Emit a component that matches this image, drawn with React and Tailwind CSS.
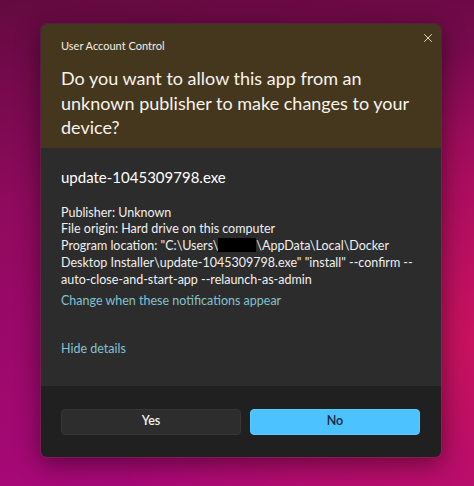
import { X } from 'lucide-react';

export default function App() {
	return (
		<div
			className="w-[474px] h-[486px] overflow-hidden pt-[23px] pl-[40px] bg-[radial-gradient(ellipse_at_100%_70%,#c8125e_0%,rgba(200,18,94,0)_60%),linear-gradient(175deg,#640a40_0%,#900a5e_40%,#aa087a_100%)]"
			style={{ fontFamily: 'Lato, "Noto Sans", sans-serif' }}>
			{/* Dialog */}
			<div className="w-[402px] rounded-[7px] overflow-hidden shadow-[0_6px_24px_rgba(0,0,0,0.45)] border border-[#3a3a3a]/40">
				{/* Header */}
				<div className="relative bg-[#45371d] pl-[20px] pr-[20px] pt-[14px] pb-[8px]">
					<div className="text-[11px] leading-[16px] text-[#f2eee6]">
						User Account Control
					</div>
					<button className="absolute top-[6px] right-[6px] w-[15px] h-[15px] flex items-center justify-center text-[#f0ece4]">
						<X size={14} strokeWidth={1.5} />
					</button>
					<h1 className="mt-[12px] text-[18px] leading-[24.5px] text-[#f7f4ee] pr-[4px]">
						Do you want to allow this app from an unknown publisher to make
						changes to your device?
					</h1>
				</div>

				{/* Body */}
				<div className="bg-[#2c2c2c] pl-[20px] pr-[20px] pt-[19px] h-[238px]">
					<div className="text-[15px] leading-[20px] text-white">
						update-1045309798.exe
					</div>
					<div className="mt-[18px] text-[12.5px] leading-[16.75px] text-[#f0f0f0]">
						<div>Publisher: Unknown</div>
						<div>File origin: Hard drive on this computer</div>
						<div>
							Program location: &quot;C:\Users\
							<span className="inline-block w-[38px] h-[14px] bg-black align-[-2px]" />
							\AppData\Local\Docker Desktop Installer\update-1045309798.exe&quot;
							&quot;install&quot; --confirm --auto-close-and-start-app
							--relaunch-as-admin
						</div>
					</div>
					<div className="mt-[5px] text-[12.5px] leading-[16.75px] text-[#82c2d2]">
						Change when these notifications appear
					</div>
					<div className="mt-[31px] text-[12.5px] leading-[16.75px] text-[#82c2d2]">
						Hide details
					</div>
				</div>

				{/* Footer */}
				<div className="bg-[#202020] pl-[20px] pt-[23px] pb-[22px] flex gap-[9px]">
					<button className="w-[180px] h-[26px] rounded-[4px] bg-[#2d2d2d] border border-[#363636] text-[12.5px] font-semibold text-[#f2f2f2]">
						Yes
					</button>
					<button className="w-[170px] h-[26px] rounded-[4px] bg-[#4cc2ff] border border-[#5ccaff] text-[12.5px] font-semibold text-[#0a2a40]">
						No
					</button>
				</div>
			</div>
		</div>
	);
}
